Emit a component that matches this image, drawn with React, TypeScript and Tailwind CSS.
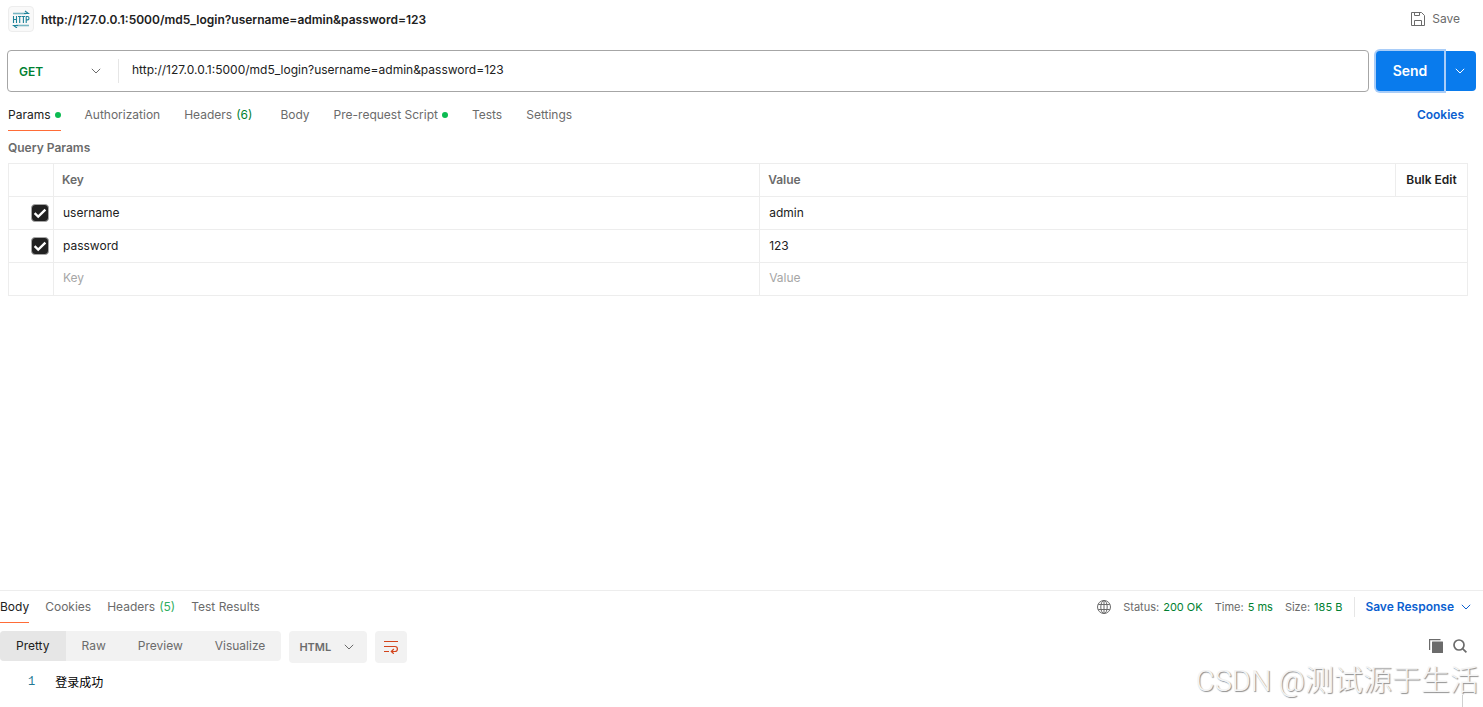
import { useState, type ReactNode } from "react";

const REQUEST_URL = "http://127.0.0.1:5000/md5_login?username=admin&password=123";

function Chevron({ className = "" }: { className?: string }) {
  return (
    <svg viewBox="0 0 10 6" className={`h-[6px] w-[10px] ${className}`} fill="none" stroke="currentColor" aria-hidden="true">
      <path d="M0.8 0.8 L5 5 L9.2 0.8" />
    </svg>
  );
}

function HttpIcon() {
  return (
    <span className="flex size-[26px] items-center justify-center rounded border border-[#ededed] bg-[#f9f9f9]">
      <svg viewBox="0 0 18 18" className="size-[18px]" fill="none" stroke="#1d8299" aria-hidden="true">
        <path d="M1 3.5H14" stroke="#78b5c2" strokeWidth="1.6" />
        <path d="M13 1L16.5 3.5H12" strokeWidth="1.1" />
        <path d="M17 15.5H4" stroke="#78b5c2" strokeWidth="1.6" />
        <path d="M5 18L1.5 15.5H6" strokeWidth="1.1" />
        <path d="M1.5 6V13M4.5 6V13M1.5 9.5H4.5M6 6.5H9.4M7.7 6.5V13M9.8 6.5H13M11.4 6.5V13M14.2 13V6.5H15.6Q17 6.5 17 8.2T15.6 9.9H14.2" strokeWidth="1.1" />
      </svg>
    </span>
  );
}

function SaveIcon() {
  return (
    <svg viewBox="0 0 14 14" className="size-[14px]" fill="none" stroke="#6b6b6b" aria-hidden="true">
      <path d="M0.5 0.5H10.5L13.5 3.5V13.5H0.5ZM3.5 13.5V8.5H10.5V13.5M3.5 0.5V3.5H8.5V0.5" />
    </svg>
  );
}

function GlobeIcon() {
  return (
    <svg viewBox="0 0 14 14" className="size-[14px]" fill="none" stroke="#6b6b6b" aria-hidden="true">
      <circle cx="7" cy="7" r="6.5" />
      <ellipse cx="7" cy="7" rx="3.2" ry="6.5" />
      <path d="M1.2 4.5H12.8M1.2 9.5H12.8M7 0.5V13.5" />
    </svg>
  );
}

function WrapIcon() {
  return (
    <svg viewBox="0 0 16 14" className="h-[14px] w-[16px]" fill="none" stroke="#d3441c" strokeWidth="1.2" aria-hidden="true">
      <path d="M1 1.5H15M1 6.5H12Q14.4 6.5 14.4 9T12 11.5H8.5M10.8 9L8.3 11.5L10.8 13.8M1 11.5H6" />
    </svg>
  );
}

function CopyIcon() {
  return (
    <svg viewBox="0 0 14 14" className="size-[14px]" fill="none" aria-hidden="true">
      <path d="M0.6 11V0.6H11.5" stroke="#6b6b6b" strokeWidth="1.2" />
      <rect x="3" y="2.6" width="11" height="11.4" rx="0.5" fill="#6b6b6b" />
    </svg>
  );
}

function SearchIcon() {
  return (
    <svg viewBox="0 0 14 14" className="size-[14px]" fill="none" stroke="#6b6b6b" strokeWidth="1.7" aria-hidden="true">
      <circle cx="6" cy="6" r="5" />
      <path d="M9.6 9.6L13.4 13.4" />
    </svg>
  );
}

function Tab({ active, dot, children, onClick }: { active: boolean; dot?: boolean; children: ReactNode; onClick: () => void }) {
  return (
    <button
      type="button"
      role="tab"
      aria-selected={active}
      onClick={onClick}
      className={`flex h-8 items-center gap-1 border-b ${active ? "border-[#ff6c37] text-[#212121]" : "border-transparent text-[#6b6b6b]"}`}
    >
      {children}
      {dot && <span className="size-[6px] rounded-full bg-[#0cbb52]" />}
    </button>
  );
}

const requestTabs = [
  { name: "Params", dot: true },
  { name: "Authorization" },
  { name: "Headers", count: "(6)", wide: true },
  { name: "Body" },
  { name: "Pre-request Script", dot: true },
  { name: "Tests" },
  { name: "Settings" },
];

const responseTabs = [{ name: "Body" }, { name: "Cookies" }, { name: "Headers", count: "(5)" }, { name: "Test Results" }];

const params = [
  { key: "username", value: "admin" },
  { key: "password", value: "123" },
];

const stats = [
  { label: "Status:", value: "200 OK" },
  { label: "Time:", value: "5 ms" },
  { label: "Size:", value: "185 B" },
];

const cell = "h-[33px] border border-[#ededed] p-0";
const field = "block w-full bg-transparent px-[9px] text-[#212121] outline-none placeholder:text-[#a6a6a6]";

export default function App() {
  const [tab, setTab] = useState("Params");
  const [responseTab, setResponseTab] = useState("Body");
  const [view, setView] = useState("Pretty");

  return (
    <div className="relative flex min-h-screen flex-col overflow-hidden bg-white font-['Inter','Noto_Sans_CJK_SC',sans-serif] text-[12px] leading-4 text-[#212121]">
      <main className="flex grow flex-col">
        <header className="flex h-[50px] items-start justify-between pt-[6px] pr-[23px] pl-2">
          <div className="flex items-center gap-[7px]">
            <HttpIcon />
            <h1 className="pt-[2px] font-semibold">{REQUEST_URL}</h1>
          </div>
          <button type="button" className="flex h-[26px] items-center gap-[7px] text-[#6b6b6b]">
            <SaveIcon />
            Save
          </button>
        </header>

        <form className="flex gap-[7px] pr-[7px] pl-[7px]" onSubmit={(e) => e.preventDefault()}>
          <div className="flex h-[42px] grow items-center rounded border border-[#a6a6a6]">
            <div className="relative flex w-[110px] items-center">
              <select aria-label="Method" className="w-full appearance-none bg-transparent pt-[2px] pl-[11px] font-semibold text-[#007f31] outline-none">
                <option>GET</option>
                <option>POST</option>
              </select>
              <Chevron className="pointer-events-none absolute right-[17px] text-[#6b6b6b]" />
            </div>
            <span className="h-6 w-px bg-[#e6e6e6]" />
            <input aria-label="Request URL" defaultValue={REQUEST_URL} className="h-6 grow bg-transparent px-[13px] pb-1 outline-none" />
          </div>
          <div className="flex py-px">
            <button type="submit" className="h-10 w-[68px] rounded-l bg-[#097bed] text-[14px] font-semibold text-white ring-2 ring-[#a9cdf8]">
              Send
            </button>
            <button type="button" aria-label="Send options" className="ml-[2px] flex h-10 w-[30px] items-center justify-center rounded-r bg-[#097bed] pr-[2px] text-white">
              <Chevron />
            </button>
          </div>
        </form>

        <div className="flex items-center justify-between pt-[7px] pr-[19px] pl-2">
          <div role="tablist" className="flex gap-6">
            {requestTabs.map((t) => (
              <div key={t.name} className={t.wide ? "pr-1" : ""}>
                <Tab active={tab === t.name} dot={t.dot} onClick={() => setTab(t.name)}>
                  {t.name}
                  {t.count && <span className="text-[#007f31]">{t.count}</span>}
                </Tab>
              </div>
            ))}
          </div>
          <a href="#cookies" className="font-semibold text-[#0b5fd0]">
            Cookies
          </a>
        </div>

        <section className="pr-[15px] pl-2">
          <h2 className="pt-[9px] pb-[7px] font-semibold text-[#6b6b6b]">Query Params</h2>
          <table className="w-full table-fixed border-collapse text-left">
            <colgroup>
              <col className="w-[45px]" />
              <col className="w-[48.4%]" />
              <col />
              <col className="w-[72px]" />
            </colgroup>
            <thead>
              <tr className="text-[#6b6b6b]">
                <th className={cell} aria-label="Enabled" />
                <th className={`${cell} font-semibold`}>
                  <span className="px-2">Key</span>
                </th>
                <th className={`${cell} font-semibold`}>
                  <span className="px-2">Value</span>
                </th>
                <th className={`${cell} text-center`}>
                  <button type="button" className="font-semibold text-[#212121]">
                    Bulk Edit
                  </button>
                </th>
              </tr>
            </thead>
            <tbody>
              {params.map((p) => (
                <tr key={p.key}>
                  <td className={cell}>
                    <span className="relative ml-[22px] flex size-[18px]">
                      <input
                        type="checkbox"
                        defaultChecked
                        aria-label={`Enable ${p.key}`}
                        className="peer size-[18px] appearance-none rounded border border-[#a6a6a6] checked:bg-[#212121]"
                      />
                      <svg viewBox="0 0 18 18" className="pointer-events-none absolute inset-0 hidden peer-checked:block" fill="none" stroke="#fff" strokeWidth="2.3" aria-hidden="true">
                        <path d="M3.6 9.2L7.2 12.6L14.4 5.6" />
                      </svg>
                    </span>
                  </td>
                  <td className={cell}>
                    <input aria-label="Key" defaultValue={p.key} className={field} />
                  </td>
                  <td className={cell} colSpan={2}>
                    <input aria-label="Value" defaultValue={p.value} className={field} />
                  </td>
                </tr>
              ))}
              <tr>
                <td className={cell} />
                <td className={cell}>
                  <input aria-label="New key" placeholder="Key" className={`${field} pb-[2px]`} />
                </td>
                <td className={cell} colSpan={2}>
                  <input aria-label="New value" placeholder="Value" className={`${field} pb-[2px]`} />
                </td>
              </tr>
            </tbody>
          </table>
        </section>
      </main>

      <section className="min-h-[117px] border-t border-[#ededed]">
        <div className="flex items-center justify-between pr-3">
          <div role="tablist" className="flex gap-4">
            {responseTabs.map((t) => (
              <Tab key={t.name} active={responseTab === t.name} onClick={() => setResponseTab(t.name)}>
                {t.name}
                {t.count && <span className="text-[#2fae60]">{t.count}</span>}
              </Tab>
            ))}
          </div>
          <div className="flex items-center gap-3 text-[11px] text-[#6b6b6b]">
            <GlobeIcon />
            {stats.map((s) => (
              <span key={s.label} className="flex gap-1">
                {s.label}
                <span className="text-[#007f31]">{s.value}</span>
              </span>
            ))}
            <span className="flex items-center gap-[10px]">
              <span className="h-5 w-px bg-[#e6e6e6]" />
              <button type="button" className="flex items-center gap-[7px] text-[12px] font-semibold text-[#0b5fd0]">
                Save Response
                <Chevron />
              </button>
            </span>
          </div>
        </div>

        <div className="flex items-start justify-between pt-2 pr-4">
          <div className="flex items-start gap-2">
            <div className="flex overflow-hidden rounded bg-[#f2f2f2]">
              {["Pretty", "Raw", "Preview", "Visualize"].map((v) => (
                <button
                  key={v}
                  type="button"
                  aria-pressed={view === v}
                  onClick={() => setView(v)}
                  className={`h-[30px] px-4 ${view === v ? "bg-[#e6e6e6] text-[#212121]" : "text-[#6b6b6b]"}`}
                >
                  {v}
                </button>
              ))}
            </div>
            <div className="relative flex h-8 w-[78px] items-center rounded bg-[#f2f2f2]">
              <select aria-label="Response format" className="w-full appearance-none bg-transparent pl-[10px] text-[11px] font-semibold text-[#6b6b6b] outline-none">
                <option>HTML</option>
                <option>JSON</option>
              </select>
              <Chevron className="pointer-events-none absolute right-[13px] text-[#6b6b6b]" />
            </div>
            <button type="button" aria-label="Wrap lines" className="flex size-8 items-center justify-center rounded bg-[#f2f2f2]">
              <WrapIcon />
            </button>
          </div>
          <div className="flex h-[30px] items-center gap-[10px]">
            <button type="button" aria-label="Copy">
              <CopyIcon />
            </button>
            <button type="button" aria-label="Search">
              <SearchIcon />
            </button>
          </div>
        </div>

        <div className="flex gap-5 pt-[11px] pl-7">
          <span className="font-['Liberation_Mono','DejaVu_Sans_Mono',monospace] text-[#237893]">1</span>
          <code className="font-['Noto_Sans_CJK_SC',sans-serif] text-black">登录成功</code>
        </div>
      </section>

      <span className="absolute right-5 bottom-0 h-3 w-px bg-[#d0d0d0]" />
      <div className="pointer-events-none absolute right-1 bottom-1 font-['Roboto','Noto_Sans_CJK_SC',sans-serif] text-[29px] leading-[44px] font-light text-[#f4f4f4] [text-shadow:1px_1px_1px_#8c8c8c]">
        CSDN @测试源于生活
      </div>
    </div>
  );
}
